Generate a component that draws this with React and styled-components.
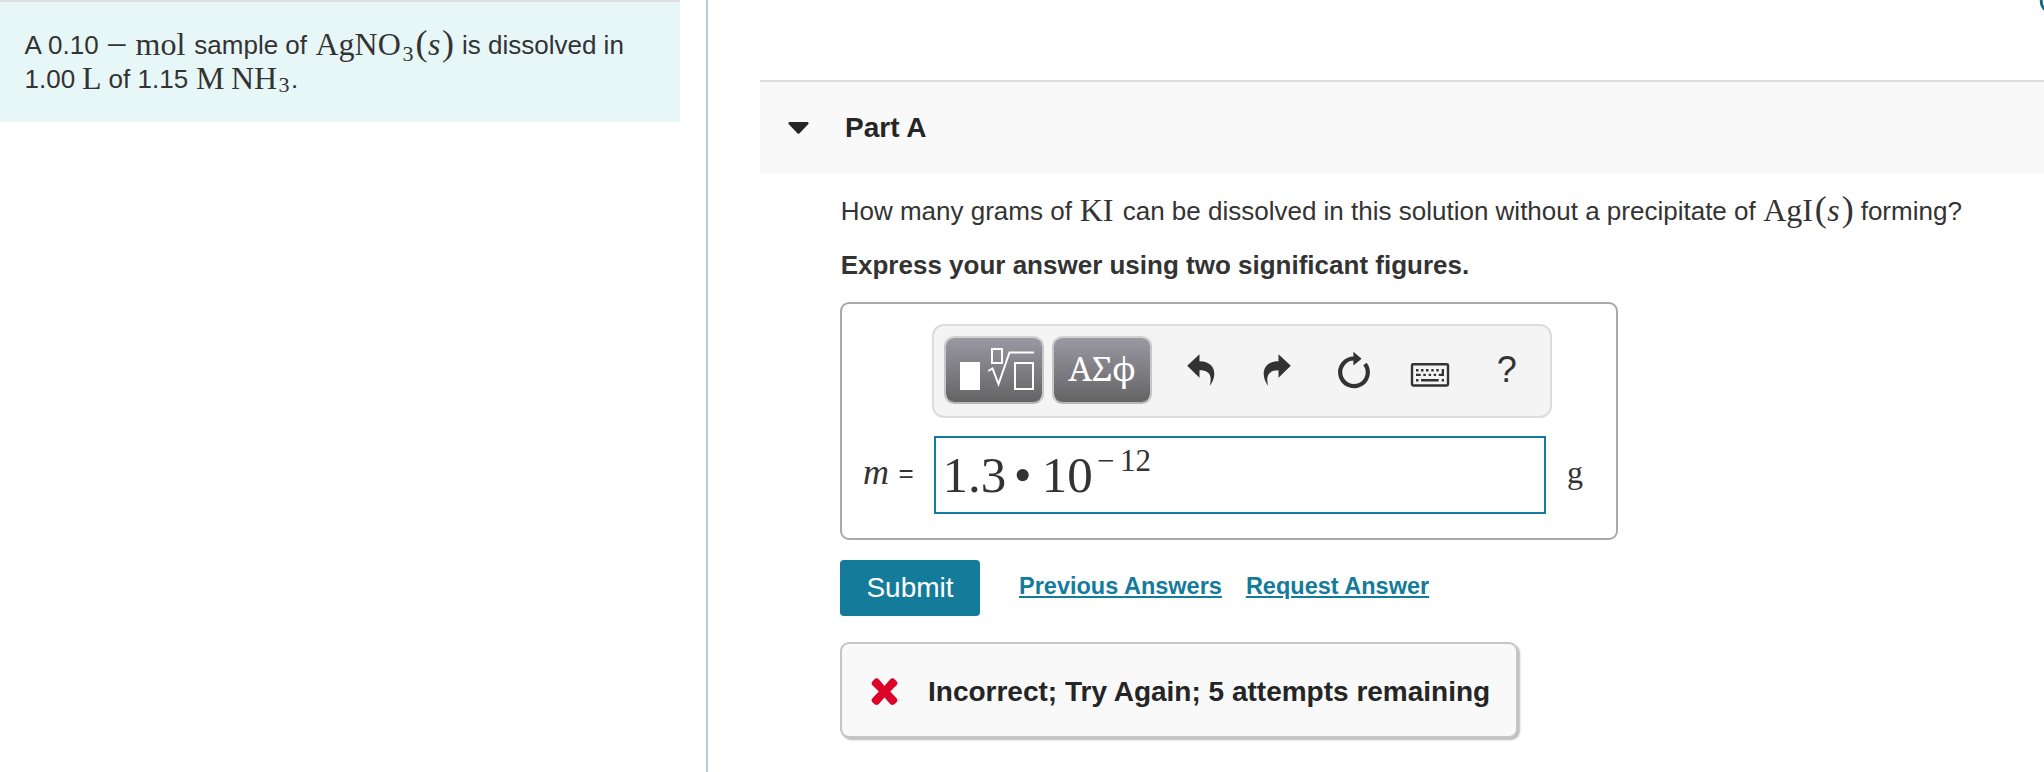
import styled, { createGlobalStyle } from "styled-components"

const GlobalStyle = createGlobalStyle`
  * {
    box-sizing: border-box;
  }

  body {
    margin: 0;
    background: #FFF;
    color: #333;
    font-family: "Liberation Sans", Arial, sans-serif;
    font-size: 26px;
    overflow: hidden;
  }
`

const Page = styled.div`
  display: flex;
  position: relative;
  width: 100%;
  height: 772px;
  overflow: hidden;
`

const Sidebar = styled.aside`
  flex: none;
  width: 708px;
  padding-right: 26px;
  border-right: 2px solid #B9CADC;
`

const Intro = styled.div`
  height: 122px;
  padding: 26px 0 0 24px;
  border-top: 2px solid #DEDEDE;
  background: #E7F7F7;
`

const Main = styled.main`
  flex: 1;
  min-width: 0;
  padding: 80px 0 0 52px;
`

const PartHeader = styled.header`
  display: flex;
  align-items: center;
  gap: 36px;
  height: 94px;
  padding-left: 28px;
  border-top: 2px solid #DDD;
  background: #F9F9F9;
`

const PartTitle = styled.h2`
  margin: 0;
  font-size: 28px;
  font-weight: 700;
  color: #252525;
`

const PartBody = styled.div`
  display: flex;
  flex-direction: column;
  align-items: flex-start;
  padding: 20px 0 0 80px;
`

const Line = styled.div`
  height: 34px;
  padding-left: ${({ $indent }) => $indent || 0}px;
  line-height: 34px;
  white-space: nowrap;
`

const Instruction = styled.p`
  margin: 20px 0;
  padding-left: 0.7px;
  line-height: 34px;
  font-weight: 700;
  white-space: nowrap;
`

const Run = styled.span`
  display: inline-block;
  width: ${({ $w }) => ($w ? `${$w}px` : "auto")};
  line-height: 0;
  white-space: pre;
`

const Tex = styled(Run)`
  font-family: "Liberation Serif", "Times New Roman", serif;
  font-size: ${({ $size }) => $size || 32}px;
  font-style: ${({ $italic }) => ($italic ? "italic" : "normal")};
  vertical-align: ${({ $shift }) => $shift ?? -1}px;
`

const AnswerBox = styled.section`
  width: 778px;
  height: 238px;
  padding: 20px 0 0 20px;
  border: 2px solid #A9A9A9;
  border-radius: 9px;
`

const Toolbar = styled.div`
  display: flex;
  align-items: flex-start;
  width: 620px;
  height: 94px;
  margin-left: 70px;
  padding: 10px 0 10px 10px;
  border: 2px solid #DCDCDC;
  border-radius: 12px;
  background: #F4F4F4;
`

const PaletteButton = styled.button`
  display: flex;
  flex: none;
  align-items: center;
  justify-content: center;
  width: 100px;
  height: 68px;
  margin-right: 8px;
  padding: 0 0 4px;
  border: 2px solid #C6C6C6;
  border-top-color: #D2D2D2;
  border-bottom-color: #B8B8B8;
  border-radius: 10px;
  background: linear-gradient(#9A98A3, #646464) padding-box;
  color: #FFF;
  font-family: "Noto Serif", "Liberation Serif", serif;
  font-size: 33.5px;
`

const Tools = styled.div`
  display: flex;
  flex: none;
  margin-left: 2.5px;
`

const ToolButton = styled.button`
  display: flex;
  align-items: center;
  justify-content: center;
  width: 76.5px;
  height: 68px;
  padding: 0;
  border: none;
  background: none;
  color: #333;
  font-family: inherit;
  font-size: 36px;
`

const AnswerRow = styled.div`
  display: flex;
  align-items: center;
  margin-top: 18px;
`

const AnswerLabel = styled.div`
  width: 72px;
  padding: 0 0 4px 1px;
  line-height: 40px;
  white-space: nowrap;
`

const AnswerField = styled.div`
  width: 612px;
  height: 78px;
  padding-left: 6.5px;
  border: 2px solid #147B9B;
  font-family: "Liberation Serif", "Times New Roman", serif;
  font-size: 51px;
  line-height: 74px;
  white-space: nowrap;
`

const Unit = styled.div`
  margin-left: 21px;
  padding-bottom: 6px;
  font-family: "Liberation Serif", "Times New Roman", serif;
  font-size: 32px;
`

const Actions = styled.div`
  display: flex;
  align-items: flex-start;
  margin-top: 20px;
`

const Submit = styled.button`
  width: 140px;
  height: 56px;
  margin-right: 39px;
  padding: 0;
  border: none;
  border-radius: 4px;
  background: #147B9B;
  color: #FFF;
  font-family: inherit;
  font-size: 28px;
`

const ActionLink = styled.a`
  margin-right: 24px;
  font-size: 23.5px;
  font-weight: 700;
  line-height: 52px;
  color: #147B9B;
  text-decoration: underline;
  text-decoration-thickness: 2px;
  text-underline-offset: 2px;
`

const Feedback = styled.div`
  display: flex;
  align-items: center;
  gap: 29px;
  width: 678px;
  height: 96px;
  margin-top: 26px;
  padding: 3px 0 0 29px;
  border: 2px solid #C6C6C6;
  border-radius: 9px;
  background: #F9F9F9;
  box-shadow: 2px 2px 2px #BBB;
  color: #252525;
  font-size: 28px;
  font-weight: 700;
  white-space: nowrap;
`

const CornerMark = styled.svg`
  position: absolute;
  top: 0;
  right: 0;
`

const Caret = () => (
  <svg width="21" height="12" viewBox="0 0 21 12">
    <path d="M1.4 0H19.6Q21 .4 20.4 1.9L11.6 11.2Q10.5 12.2 9.4 11.2L.6 1.9Q0 .4 1.4 0Z" fill="#252525" />
  </svg>
)

const TemplatesIcon = () => (
  <svg width="84" height="44" viewBox="-2 0 84 44" fill="none" stroke="#FFF" strokeWidth="2">
    <path d="M6 16H26V44H6Z" fill="#FFF" stroke="none" />
    <path d="M38 3H48V17H38Z" />
    <path d="M34.3 25L38.5 22.5L44.5 38L55.5 6.5H80" />
    <path d="M61 17H79V43H61Z" />
  </svg>
)

const CurvedArrow = ({ flip }) => (
  <svg width="40" height="40" viewBox="0 0 40 40" fill="currentColor">
    <path
      transform={flip ? "matrix(-1 0 0 1 40 0)" : undefined}
      d="M6.2 15.7L18.5 4.3V11.3C28.5 11.3 33.5 17 33.3 24C33.2 29 31 33 28.8 35.7C31 27.5 30 20.3 18.5 20.3V27.7Z"
    />
  </svg>
)

const ResetIcon = () => (
  <svg width="40" height="40" viewBox="0 0 40 40">
    <path d="M31 14A13.8 13.8 0 1 1 20 8.5" fill="none" stroke="currentColor" strokeWidth="4.2" />
    <path d="M19.4 1.8L27.6 8.7L19.4 15.6Z" fill="currentColor" />
  </svg>
)

const KeyboardIcon = () => (
  <svg width="40" height="40" viewBox="0 0 40 40">
    <rect x="2" y="14.2" width="36" height="21.3" rx="1.2" fill="none" stroke="currentColor" strokeWidth="2.4" />
    <path
      d="M6 19h2.5v2.4H6zM11 19h2.5v2.4H11zM16 19h2.5v2.4H16zM21.3 19h2.4v2.4h-2.4zM26.3 19h2.4v2.4h-2.4zM31.7 19H34v7.1h-5.3v-2.4h3zM6 23.7h4.7v2.4H6zM13.3 23.7h2.5v2.4h-2.5zM18.7 23.7h2.4v2.4h-2.4zM23.7 23.7h2.4v2.4h-2.4zM6 29h2.5v2.4H6zM11 29h17.7v2.4H11zM31.7 29H34v2.4h-2.3z"
      fill="currentColor"
    />
  </svg>
)

const WrongIcon = () => (
  <svg width="28" height="28" viewBox="0 0 28 28">
    <path
      d="M1.6 3.2L4.2 .6Q6 -.4 7.8 1.2L13.5 8L19.2 1.2Q21 -.4 22.8 .6L25.6 3.2Q27.2 5 25.8 7L19.2 13.6L25.8 20.4Q27.2 22.4 25.6 24.2L23 26.6Q21 27.6 19.2 26L13.5 19.4L7.8 26Q6 27.6 4 26.6L1.4 24.2Q-.2 22.4 1.2 20.4L7.8 13.6L1.2 7Q-.2 5 1.6 3.2Z"
      fill="#DB0428"
    />
  </svg>
)

const App = () => {
  return (
    <Page>
      <GlobalStyle />
      <Sidebar>
        <Intro>
          <Line $indent={0.5}>
            <Run $w={23.5}>A</Run>
            <Run $w={58}>0.10 </Run>
            <Tex $w={29.5} $size={38} $shift={-4}>−</Tex>
            <Tex $w={58.8}>mol </Tex>
            <Run $w={121.2}>sample of </Run>
            <Tex $w={87}>AgNO</Tex>
            <Tex $w={13} $size={22} $shift={-7}>3</Tex>
            <Tex $w={12.5} $size={36}>(</Tex>
            <Tex $w={14} $italic>s</Tex>
            <Tex $w={20} $size={36}>)</Tex>
            <Run>is dissolved in</Run>
          </Line>
          <Line $indent={0.5}>
            <Run $w={57.5}>1.00 </Run>
            <Tex $w={26.5}>L</Tex>
            <Run $w={29}>of </Run>
            <Run $w={58.5}>1.15 </Run>
            <Tex $w={35}>M</Tex>
            <Tex $w={47.5}>NH</Tex>
            <Tex $w={12.5} $size={22} $shift={-4}>3</Tex>
            <Run>.</Run>
          </Line>
        </Intro>
      </Sidebar>

      <Main>
        <PartHeader>
          <Caret />
          <PartTitle>Part A</PartTitle>
        </PartHeader>

        <PartBody>
          <Line $indent={0.7}>
            <Run $w={239}>How many grams of </Run>
            <Tex $w={43}>KI </Tex>
            <Run $w={640.5}>can be dissolved in this solution without a precipitate of </Run>
            <Tex $w={51.5}>AgI</Tex>
            <Tex $w={12.5} $size={36}>(</Tex>
            <Tex $w={14.5} $italic>s</Tex>
            <Tex $w={19} $size={36}>)</Tex>
            <Run>forming?</Run>
          </Line>
          <Instruction>Express your answer using two significant figures.</Instruction>

          <AnswerBox>
            <Toolbar>
              <PaletteButton>
                <TemplatesIcon />
              </PaletteButton>
              <PaletteButton>ΑΣϕ</PaletteButton>
              <Tools>
                <ToolButton><CurvedArrow /></ToolButton>
                <ToolButton><CurvedArrow flip /></ToolButton>
                <ToolButton><ResetIcon /></ToolButton>
                <ToolButton><KeyboardIcon /></ToolButton>
                <ToolButton>?</ToolButton>
              </Tools>
            </Toolbar>
            <AnswerRow>
              <AnswerLabel>
                <Tex $w={35.5} $size={36} $shift={-2} $italic>m</Tex>
                <Run>=</Run>
              </AnswerLabel>
              <AnswerField>
                <Run $w={71.2}>1.3</Run>
                <Run $w={28}>•</Run>
                <Run $w={55.4}>10</Run>
                <Tex $w={23} $size={31} $shift={21}>−</Tex>
                <Tex $size={31} $shift={21}>12</Tex>
              </AnswerField>
              <Unit>g</Unit>
            </AnswerRow>
          </AnswerBox>

          <Actions>
            <Submit>Submit</Submit>
            <ActionLink>Previous Answers</ActionLink>
            <ActionLink>Request Answer</ActionLink>
          </Actions>

          <Feedback>
            <WrongIcon />
            Incorrect; Try Again; 5 attempts remaining
          </Feedback>
        </PartBody>
      </Main>

      <CornerMark width="5" height="12" viewBox="0 0 5 12">
        <path d="M2.2 0Q2 6.5 6 9.5" fill="none" stroke="#0F6880" strokeWidth="2.8" />
      </CornerMark>
    </Page>
  )
}

export default App
